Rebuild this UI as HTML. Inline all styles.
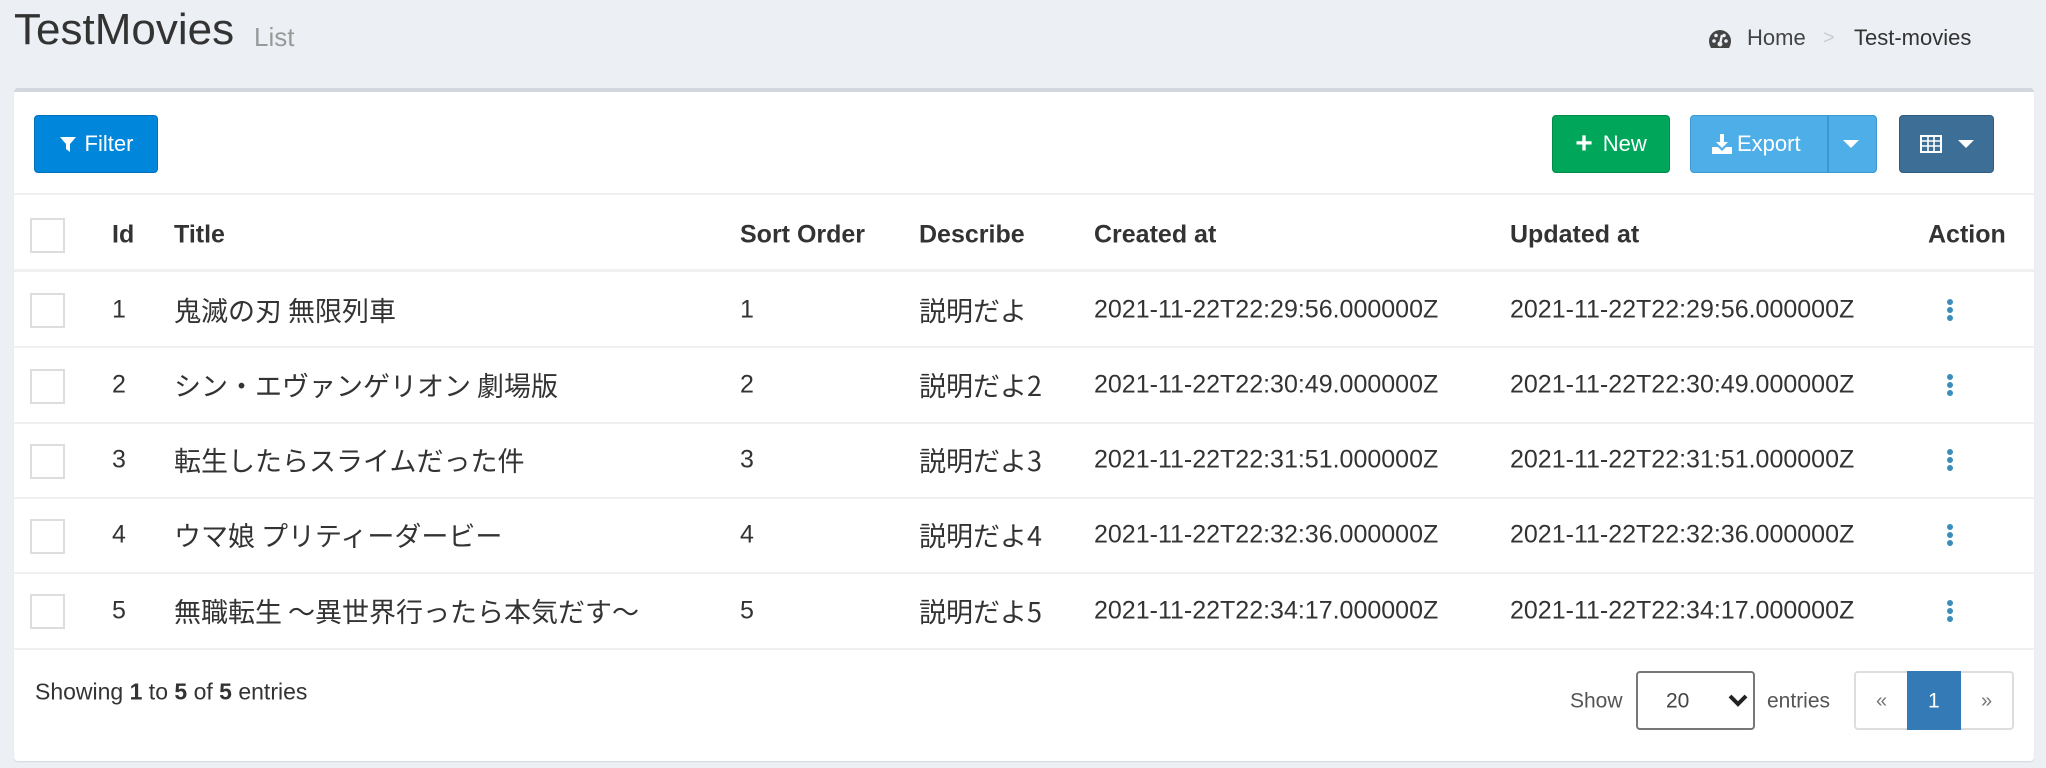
<!DOCTYPE html>
<html><head><meta charset="utf-8"><style>
*{margin:0;padding:0;box-sizing:border-box}
body{width:2046px;height:768px;background:#ecf0f5;font-family:"Liberation Sans","Noto Sans CJK JP",sans-serif;color:#333;position:relative;overflow:hidden}
.a{position:absolute;white-space:nowrap}
.box{position:absolute;left:14px;top:88px;width:2020px;height:673px;background:#fff;border-top:4px solid #d2d6de;border-radius:4px;box-shadow:0 1px 1px rgba(0,0,0,.1)}
.btn{position:absolute;top:115px;height:58px;border-radius:4px;color:#fff;font-size:22px;display:flex;align-items:center;justify-content:center}
.hl{position:absolute;left:14px;width:2020px;height:3px;background:#f0f0f0}
.cb{position:absolute;left:30px;width:35px;height:35px;border:2px solid #ddd;background:#fff}
.t{position:absolute;font-size:25px;line-height:1;white-space:nowrap;transform:translateY(-50%)}
.j{font-family:"Noto Sans CJK JP","Liberation Sans",sans-serif;font-size:27px;line-height:1.2;transform:translateY(calc(-50% - 0px))}
.h{font-weight:bold}
.dots{position:absolute;left:1947px;width:6px}
.dots i{display:block;width:6px;height:6px;border-radius:3px;background:#3c8dbc;margin-bottom:2px}
</style></head><body>
<div class="a" style="left:14px;top:5px;font-size:44px;color:#333">TestMovies</div>
<div class="a" style="left:254px;top:22px;font-size:26px;color:#999">List</div>
<svg class="a" style="left:1708px;top:29px" width="24" height="20" viewBox="0 0 24 20"><path d="M12 1A11 11 0 0 0 1 12c0 3 1 5 2 7h18c1-2 2-4 2-7A11 11 0 0 0 12 1z" fill="#444"/><circle cx="6" cy="12" r="1.8" fill="#ecf0f5"/><circle cx="8" cy="6.5" r="1.8" fill="#ecf0f5"/><circle cx="18" cy="12" r="1.8" fill="#ecf0f5"/><circle cx="16" cy="6.5" r="1.8" fill="#ecf0f5"/><path d="M12 15l2-9" stroke="#ecf0f5" stroke-width="2.4"/><circle cx="12" cy="15" r="2.5" fill="#ecf0f5"/></svg>
<div class="a" style="left:1747px;top:25px;font-size:22px;color:#444">Home</div>
<div class="a" style="left:1823px;top:27px;font-size:20px;color:#ccc">&gt;</div>
<div class="a" style="left:1854px;top:25px;font-size:22px;color:#333">Test-movies</div>
<div class="box"></div>
<div class="btn" style="left:34px;width:124px;background:#0087dc;border:1px solid #0070b8"><svg width="18" height="18" viewBox="0 0 18 18" style="margin-right:8px"><path d="M1 2h16l-6 7v8l-4-3V9z" fill="#fff"/></svg>Filter</div>
<div class="btn" style="left:1552px;width:118px;background:#00a65a;border:1px solid #008d4c"><span style="font-size:30px;font-weight:bold;margin-right:10px;line-height:1">+</span>New</div>
<div class="btn" style="left:1690px;width:187px;background:#4eaee8;border:1px solid #3d97d0;justify-content:flex-start"><svg width="22" height="22" viewBox="0 0 22 22" style="margin:0 4px 0 20px"><path d="M9 1h4v8h4l-6 6-6-6h4z" fill="#fff"/><path d="M1 14h6l4 4 4-4h6v7H1z" fill="#fff"/></svg>Export<div style="position:absolute;left:136px;top:0;width:2px;height:56px;background:#3d97d0"></div><div style="position:absolute;left:152px;top:24px;border-left:8px solid transparent;border-right:8px solid transparent;border-top:8px solid #fff"></div></div>
<div class="btn" style="left:1899px;width:95px;background:#3c6e96;border:1px solid #305b80"><svg width="22" height="18" viewBox="0 0 22 18"><rect x="1" y="1" width="20" height="16" fill="none" stroke="#fff" stroke-width="2"/><path d="M1 6h20M1 11h20M8 1v16M14 1v16" stroke="#fff" stroke-width="1.6"/></svg><div style="width:16px;height:0;margin-left:16px;border-left:8px solid transparent;border-right:8px solid transparent;border-top:8px solid #fff"></div></div>
<div class="hl" style="top:193px;height:2px"></div>
<div class="hl" style="top:269px"></div>
<div class="hl" style="top:346px;height:2px"></div>
<div class="hl" style="top:422px;height:2px"></div>
<div class="hl" style="top:497px;height:2px"></div>
<div class="hl" style="top:572px;height:2px"></div>
<div class="hl" style="top:648px;height:2px"></div>
<div class="cb" style="top:218px"></div>
<div class="t h" style="left:112px;top:235px">Id</div>
<div class="t h" style="left:174px;top:235px">Title</div>
<div class="t h" style="left:740px;top:235px">Sort Order</div>
<div class="t h" style="left:919px;top:235px">Describe</div>
<div class="t h" style="left:1094px;top:235px">Created at</div>
<div class="t h" style="left:1510px;top:235px">Updated at</div>
<div class="t h" style="left:1928px;top:235px">Action</div>

<div class="cb" style="top:293px"></div>
<div class="t" style="left:112px;top:310px">1</div><div class="t j" style="left:174px;top:310px">鬼滅の刃 無限列車</div><div class="t" style="left:740px;top:310px">1</div><div class="t j" style="left:919px;top:310px">説明だよ</div><div class="t" style="left:1094px;top:310px">2021-11-22T22:29:56.000000Z</div><div class="t" style="left:1510px;top:310px">2021-11-22T22:29:56.000000Z</div><div class="dots" style="top:299px"><i></i><i></i><i></i></div>

<div class="cb" style="top:369px"></div>
<div class="t" style="left:112px;top:385px">2</div><div class="t j" style="left:174px;top:385px">シン・エヴァンゲリオン 劇場版</div><div class="t" style="left:740px;top:385px">2</div><div class="t j" style="left:919px;top:385px">説明だよ2</div><div class="t" style="left:1094px;top:385px">2021-11-22T22:30:49.000000Z</div><div class="t" style="left:1510px;top:385px">2021-11-22T22:30:49.000000Z</div><div class="dots" style="top:374px"><i></i><i></i><i></i></div>

<div class="cb" style="top:444px"></div>
<div class="t" style="left:112px;top:460px">3</div><div class="t j" style="left:174px;top:460px">転生したらスライムだった件</div><div class="t" style="left:740px;top:460px">3</div><div class="t j" style="left:919px;top:460px">説明だよ3</div><div class="t" style="left:1094px;top:460px">2021-11-22T22:31:51.000000Z</div><div class="t" style="left:1510px;top:460px">2021-11-22T22:31:51.000000Z</div><div class="dots" style="top:449px"><i></i><i></i><i></i></div>

<div class="cb" style="top:519px"></div>
<div class="t" style="left:112px;top:535px">4</div><div class="t j" style="left:174px;top:535px">ウマ娘 プリティーダービー</div><div class="t" style="left:740px;top:535px">4</div><div class="t j" style="left:919px;top:535px">説明だよ4</div><div class="t" style="left:1094px;top:535px">2021-11-22T22:32:36.000000Z</div><div class="t" style="left:1510px;top:535px">2021-11-22T22:32:36.000000Z</div><div class="dots" style="top:524px"><i></i><i></i><i></i></div>

<div class="cb" style="top:594px"></div>
<div class="t" style="left:112px;top:611px">5</div><div class="t j" style="left:174px;top:611px">無職転生 ～異世界行ったら本気だす～</div><div class="t" style="left:740px;top:611px">5</div><div class="t j" style="left:919px;top:611px">説明だよ5</div><div class="t" style="left:1094px;top:611px">2021-11-22T22:34:17.000000Z</div><div class="t" style="left:1510px;top:611px">2021-11-22T22:34:17.000000Z</div><div class="dots" style="top:600px"><i></i><i></i><i></i></div>

<div class="t" style="left:35px;top:692px;font-size:23px">Showing <b>1</b> to <b>5</b> of <b>5</b> entries</div>
<div class="t" style="left:1570px;top:701px;font-size:21px;color:#555">Show</div>
<div class="a" style="left:1636px;top:671px;width:119px;height:59px;border:2px solid #777;border-radius:4px"></div>
<div class="t" style="left:1666px;top:701px;font-size:21px;color:#444">20</div>
<svg class="a" style="left:1728px;top:694px" width="20" height="14" viewBox="0 0 20 14"><path d="M2 2l8 8 8-8" fill="none" stroke="#222" stroke-width="4"/></svg>
<div class="t" style="left:1767px;top:701px;font-size:21px;color:#555">entries</div>
<div class="a" style="left:1854px;top:671px;width:160px;height:59px;border:2px solid #ddd;border-radius:4px"></div>
<div class="a" style="left:1907px;top:671px;width:54px;height:59px;background:#337ab7"></div>
<div class="t" style="left:1876px;top:701px;font-size:20px;color:#777">«</div>
<div class="t" style="left:1928px;top:701px;font-size:21px;color:#fff">1</div>
<div class="t" style="left:1981px;top:701px;font-size:20px;color:#777">»</div>
</body></html>
